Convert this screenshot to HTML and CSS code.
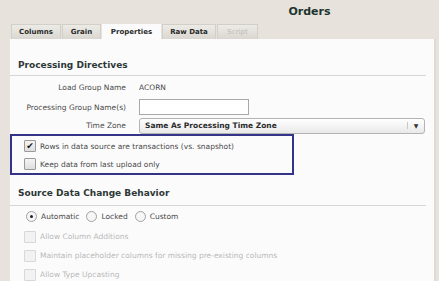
FILE: index.html
```html
<!DOCTYPE html>
<html lang="en">
<head>
    <meta charset="UTF-8">
    <title>Orders</title>
    <link rel="stylesheet" href="styles.css">
</head>
<body>
    <div class="header">
        <h1>Orders</h1>
    </div>
    <div class="tabs">
        <div class="tab t-columns">Columns</div>
        <div class="tab t-grain">Grain</div>
        <div class="tab t-props active">Properties</div>
        <div class="tab t-raw">Raw Data</div>
        <div class="tab t-script disabled">Script</div>
    </div>
    <div class="panel">
        <div class="section-title">Processing Directives</div>
        <div class="fields">
            <div class="field">
                <label>Load Group Name</label>
                <span class="value">ACORN</span>
            </div>
            <div class="field">
                <label>Processing Group Name(s)</label>
                <input type="text" class="text-input">
            </div>
            <div class="field short">
                <label>Time Zone</label>
                <div class="select">
                    <span>Same As Processing Time Zone</span>
                    <span class="arrow">&#9660;</span>
                </div>
            </div>
        </div>
        <div class="highlight">
            <div class="check-row">
                <span class="box checked">&#10004;</span>
                <span>Rows in data source are transactions (vs. snapshot)</span>
            </div>
            <div class="check-row">
                <span class="box"></span>
                <span>Keep data from last upload only</span>
            </div>
        </div>
        <div class="section-title second">Source Data Change Behavior</div>
        <div class="radios">
            <span class="radio on"></span><span class="radio-label">Automatic</span>
            <span class="radio"></span><span class="radio-label">Locked</span>
            <span class="radio"></span><span class="radio-label">Custom</span>
        </div>
        <div class="check-row off">
            <span class="box"></span>
            <span>Allow Column Additions</span>
        </div>
        <div class="check-row off">
            <span class="box"></span>
            <span>Maintain placeholder columns for missing pre-existing columns</span>
        </div>
        <div class="check-row off">
            <span class="box"></span>
            <span>Allow Type Upcasting</span>
        </div>
    </div>
</body>
</html>
```
FILE: styles.css
```css
body {
    margin: 0;
    background-color: #e7e2db;
    font-family: "DejaVu Sans", Verdana, sans-serif;
    font-size: 7.5px;
    color: #4a4a4a;
    overflow: hidden;
}
.header {
    height: 24px;
    padding-left: 180px;
    text-align: center;
}
h1 {
    margin: 0;
    padding-top: 5px;
    font-size: 11px;
    color: #1d3530;
}
.tabs {
    display: flex;
    gap: 1px;
    margin-left: 11px;
    height: 15px;
}
.tab {
    box-sizing: border-box;
    text-align: center;
    line-height: 15px;
    font-weight: bold;
    font-size: 7px;
    color: #2a2a2a;
    background: linear-gradient(#ecebe6, #d9d7d0);
    border: 1px solid #d2cfc8;
    border-bottom: none;
}
.t-columns { width: 50px; }
.t-grain { width: 39px; }
.t-props { width: 59px; }
.t-raw { width: 54px; }
.t-script { width: 41px; }
.tab.active {
    background: #fbfbfb;
    border-color: #fbfbfb;
}
.tab.disabled {
    color: #bcbcb8;
    font-weight: normal;
}
.panel {
    margin-left: 10px;
    width: 424px;
    height: 242px;
    background-color: #fbfbfb;
    border-right: 2px solid #dcdad5;
}
.section-title {
    margin: 0 8px 0 0;
    padding: 21px 0 5px 8px;
    font-size: 9px;
    font-weight: bold;
    color: #2c3836;
    border-bottom: 1px solid #d6d6d6;
}
.section-title.second {
    padding-top: 13px;
    padding-bottom: 7px;
}
.fields {
    padding-top: 1px;
}
.field {
    display: flex;
    align-items: center;
    height: 20px;
}
.field.short {
    height: 17px;
}
.field label {
    width: 116px;
    text-align: right;
    padding-right: 13px;
}
.text-input {
    width: 110px;
    height: 16px;
    padding: 0;
    border: 1px solid #a9a9a9;
    box-sizing: border-box;
    background: #fff;
}
.select {
    display: flex;
    justify-content: space-between;
    align-items: center;
    width: 286px;
    height: 16px;
    box-sizing: border-box;
    border: 1px solid #b3b3b3;
    border-radius: 3px;
    background: linear-gradient(#ffffff, #e9e9e9);
    font-weight: bold;
    color: #2b2b2b;
    padding-left: 5px;
}
.arrow {
    font-size: 6px;
    width: 16px;
    text-align: center;
    border-left: 1px solid #c8c8c8;
    color: #333;
}
.highlight {
    width: 280px;
    padding: 1px 0 0 0;
    border: 2px solid #33338a;
}
.check-row {
    display: flex;
    align-items: center;
    height: 19px;
    padding-left: 14px;
    gap: 4px;
}
.highlight .check-row {
    height: 18px;
    padding-left: 12px;
}
.box {
    width: 10px;
    height: 10px;
    border: 1px solid #9a9a9a;
    border-radius: 1px;
    background: linear-gradient(#f4f4f4, #dedede);
    font-size: 9px;
    line-height: 10px;
    text-align: center;
    color: #111;
}
.radios {
    display: flex;
    align-items: center;
    height: 21px;
    padding-left: 16px;
}
.radio {
    width: 9px;
    height: 9px;
    border: 1px solid #a2a2a2;
    border-radius: 50%;
    background: #f6f6f6;
    position: relative;
    margin-right: 4px;
}
.radio.on::after {
    content: "";
    position: absolute;
    left: 3px;
    top: 3px;
    width: 3px;
    height: 3px;
    border-radius: 50%;
    background: #222;
}
.radio-label {
    margin-right: 7px;
}
.check-row.off {
    color: #b9b9b9;
}
.check-row.off .box {
    border-color: #d8d8d8;
    background: #f2f2f2;
}
```
